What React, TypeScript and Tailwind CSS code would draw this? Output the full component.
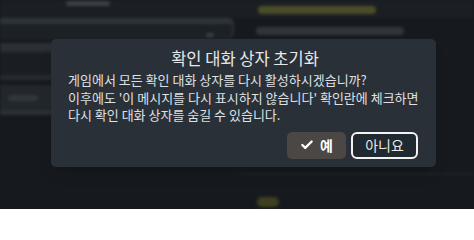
import { Check } from "lucide-react";

const font = { fontFamily: '"Noto Sans CJK KR", "Noto Sans", sans-serif' };

function Backdrop() {
  // Blurred settings screen behind the modal
  return (
    <div className="h-[209px] w-[474px] overflow-hidden bg-[#161a1e] blur-[1.5px]">
      <div className="flex h-[18px] items-start bg-[#1b1f24]">
        <div className="ml-[66px] mt-[1px] h-[5px] w-[44px] rounded-sm bg-[#3a4046]" />
        <div className="ml-[148px] mt-[6px] h-[8px] w-[118px] rounded-sm bg-[#4a4d28]" />
      </div>
      <div className="flex">
        <div className="w-[234px]">
          <div className="h-[6px] rounded-tr-lg bg-[#2e343a]" />
          <div className="flex h-[16px] items-end justify-end rounded-br-lg border-r-2 border-[#2a3036] bg-[#1c2126] pb-[3px] pr-[18px]">
            <div className="h-[4px] w-[8px] rounded-sm bg-[#3a4046]" />
          </div>
        </div>
        <div className="ml-[22px] mt-[9px] h-[8px] w-[148px] rounded-sm bg-[#2f353b]" />
      </div>
      <div className="mt-[3px] h-[9px] w-[60px] bg-[#2a3036]" />
      <div className="h-[23px] w-[60px] bg-[#1a1e22]" />
      <div className="h-[5px] w-[60px] bg-[#262b30]" />
      <div className="mt-[5px] flex h-[25px] w-[60px] items-center bg-[#22272c] pl-[8px]">
        <div className="h-[6px] w-[30px] rounded-sm bg-[#30363b]" />
      </div>
      <div className="h-[5px] w-[60px] bg-[#2a3036]" />
      <div className="ml-[240px] mt-[58px] h-[2px] w-[234px] bg-[#1d2226]" />
      <div className="ml-[257px] mt-[22px] h-[10px] w-[22px] rounded-full bg-[#3d3f1e]" />
    </div>
  );
}

export default function App() {
  return (
    <div className="relative h-[209px] w-[474px] overflow-hidden bg-[#161a1e]" style={font}>
      <Backdrop />

      {/* Modal */}
      <div className="absolute left-[51px] top-[39px] flex w-[385px] flex-col rounded-[5px] bg-[#2a3037] pb-[8px] pl-[17px] pr-[14px] pt-[8px] shadow-lg">
        <h2 className="text-center text-[16.5px] leading-[23px] text-[#e6e8ea]">
          확인 대화 상자 초기화
        </h2>
        <p className="mt-[1px] text-[13px] leading-[17.5px] text-[#dfe1e3]">
          게임에서 모든 확인 대화 상자를 다시 활성하시겠습니까?
          <br />
          이후에도 '이 메시지를 다시 표시하지 않습니다' 확인란에 체크하면
          <br />
          다시 확인 대화 상자를 숨길 수 있습니다.
        </p>
        <div className="mt-[8px] flex justify-end gap-[5px] pr-[4px]">
          <button className="flex h-[27px] w-[59px] items-center justify-center gap-[6px] rounded-[5px] bg-[#4a4745] text-[14px] text-white">
            <Check size={14} strokeWidth={4} />
            <span className="font-bold">예</span>
          </button>
          <button className="flex h-[27px] w-[67px] items-center justify-center rounded-[6px] border-2 border-[#f2f2f2] bg-[#212930] text-[14px] text-[#e8e8e8]">
            아니요
          </button>
        </div>
      </div>
    </div>
  );
}
